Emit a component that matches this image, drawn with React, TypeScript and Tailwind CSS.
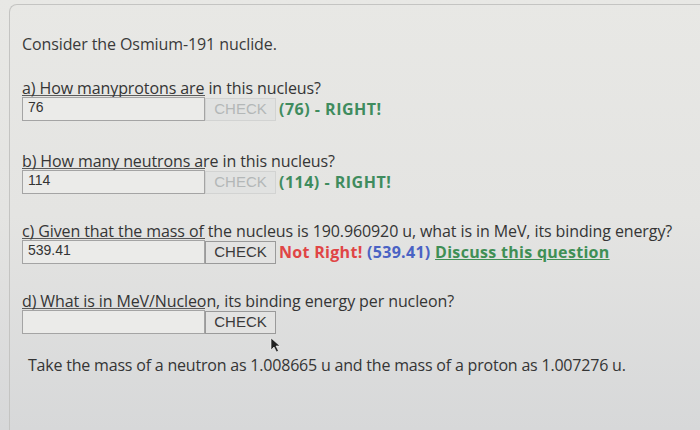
import React from "react";

const font = { fontFamily: '"Open Sans", "DejaVu Sans", sans-serif' };

function CheckBtn({ disabled }: { disabled?: boolean }) {
  return (
    <div
      className={
        "h-[23px] w-[71px] flex items-center justify-center text-[15px] border " +
        (disabled
          ? "text-[#b3b7b7] border-[#d2d3d2] bg-[#e1e2e1]"
          : "text-[#3a3a3a] border-[#9a9a9a] bg-[#e3e3e2]")
      }
      style={{ fontFamily: '"Liberation Sans", Arial, sans-serif' }}
    >
      CHECK
    </div>
  );
}

function Question({
  label,
  value,
  disabled,
  result,
  mt,
}: {
  label: string;
  value: string;
  disabled?: boolean;
  result?: React.ReactNode;
  mt: string;
}) {
  return (
    <div className={mt}>
      <div className="text-[16px] leading-[19px] text-[#353535] tracking-[-0.1px] whitespace-nowrap">{label}</div>
      <div className="w-[183px] border-t border-[#5a5a5a] -mt-[3px]" />
      <div className="flex items-center mt-[1px]">
        <div
          className="w-[183px] h-[24px] border border-[#a4a4a4] bg-[#ebebe9] text-[14px] text-[#333] pl-[5px] leading-[19px]"
          style={{ fontFamily: '"Liberation Sans", Arial, sans-serif' }}
        >
          {value}
        </div>
        <CheckBtn disabled={disabled} />
        <div className="ml-[3px] text-[16px] font-bold whitespace-nowrap tracking-[0.5px]">{result}</div>
      </div>
    </div>
  );
}

export default function App() {
  return (
    <div
      className="w-[700px] h-[430px] overflow-hidden bg-linear-to-b from-[#e8e8e5] via-[#e4e4e2] to-[#d7d8d9] pt-[4px] pl-[9px]"
      style={font}
    >
      <div className="h-[440px] border-l border-t border-[#c4c4c2] rounded-tl-[8px] pl-[12px] pt-[28px] relative">
        <div className="text-[16px] leading-[22px] text-[#3a3a3a] tracking-[-0.1px]">
          Consider the Osmium-191 nuclide.
        </div>

        <Question
          mt="mt-[24px]"
          label="a) How manyprotons are in this nucleus?"
          value="76"
          disabled
          result={<span className="text-[#3f8c5e]">(76) - RIGHT!</span>}
        />
        <Question
          mt="mt-[31px]"
          label="b) How many neutrons are in this nucleus?"
          value="114"
          disabled
          result={<span className="text-[#3f8c5e]">(114) - RIGHT!</span>}
        />
        <Question
          mt="mt-[28px]"
          label="c) Given that the mass of the nucleus is 190.960920 u, what is in MeV, its binding energy?"
          value="539.41"
          result={
            <span className="tracking-[0.3px]">
              <span className="text-[#e04545]">Not Right!</span>{" "}
              <span className="text-[#4a62c4]">(539.41)</span>{" "}
              <span className="text-[#3f8f55] underline">Discuss this question</span>
            </span>
          }
        />
        <Question mt="mt-[28px]" label="d) What is in MeV/Nucleon, its binding energy per nucleon?" value="" />

        <div className="mt-[22px] text-[16px] leading-[19px] text-[#353535] tracking-[-0.2px] pl-[6px] whitespace-nowrap">
          Take the mass of a neutron as 1.008665 u and the mass of a proton as 1.007276 u.
        </div>

        <svg className="absolute left-[260px] top-[332px]" width="12" height="16" viewBox="0 0 12 16">
          <path d="M1 1 L1 13 L4 10 L6.5 15 L8.5 14 L6 9 L10 9 Z" fill="#222" stroke="#fff" strokeWidth="0.6" />
        </svg>
      </div>
    </div>
  );
}
